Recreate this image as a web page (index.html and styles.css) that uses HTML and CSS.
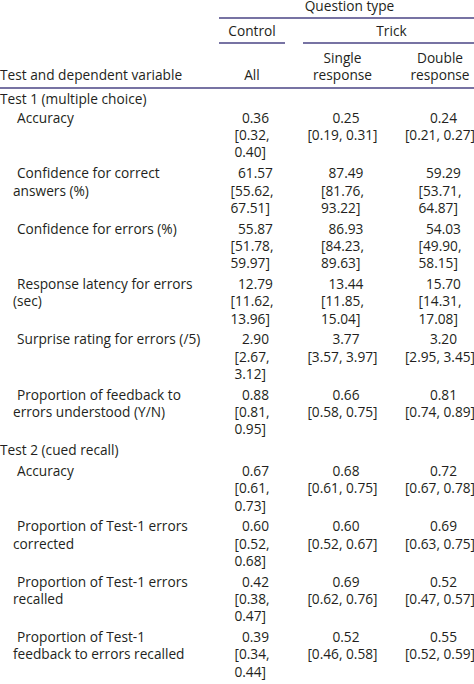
FILE: index.html
```html
<!DOCTYPE html>
<html lang="en">
<head>
<meta charset="utf-8">
<title>Question type table</title>
<link rel="stylesheet" href="styles.css">
</head>
<body>
<table class="tbl">
  <colgroup>
    <col class="w1"><col class="w2"><col class="w3"><col class="w4">
  </colgroup>
  <thead>
    <tr class="h1">
      <th class="varh" rowspan="3">Test and dependent variable</th>
      <th class="qt" colspan="3">Question type</th>
    </tr>
    <tr class="h2">
      <th class="ctl"><span class="u">Control</span></th>
      <th class="trick" colspan="2">Trick</th>
    </tr>
    <tr class="h3">
      <th class="c2">All</th>
      <th class="c3">Single<br>response</th>
      <th class="c4">Double<br>response</th>
    </tr>
  </thead>
  <tbody>
    <tr class="grp first"><td colspan="4">Test 1 (multiple choice)</td></tr>
    <tr>
      <td class="lab">Accuracy</td>
      <td class="c2"><span class="m">0.36</span><span class="ci">[0.32,<br>0.40]</span></td>
      <td class="c3"><span class="m">0.25</span><span class="ci">[0.19, 0.31]</span></td>
      <td class="c4"><span class="m">0.24</span><span class="ci">[0.21, 0.27]</span></td>
    </tr>
    <tr>
      <td class="lab">Confidence for correct<br>answers (%)</td>
      <td class="c2"><span class="m">61.57</span><span class="ci">[55.62,<br>67.51]</span></td>
      <td class="c3"><span class="m">87.49</span><span class="ci">[81.76,<br>93.22]</span></td>
      <td class="c4"><span class="m">59.29</span><span class="ci">[53.71,<br>64.87]</span></td>
    </tr>
    <tr>
      <td class="lab">Confidence for errors (%)</td>
      <td class="c2"><span class="m">55.87</span><span class="ci">[51.78,<br>59.97]</span></td>
      <td class="c3"><span class="m">86.93</span><span class="ci">[84.23,<br>89.63]</span></td>
      <td class="c4"><span class="m">54.03</span><span class="ci">[49.90,<br>58.15]</span></td>
    </tr>
    <tr>
      <td class="lab">Response latency for errors<br>(sec)</td>
      <td class="c2"><span class="m">12.79</span><span class="ci">[11.62,<br>13.96]</span></td>
      <td class="c3"><span class="m">13.44</span><span class="ci">[11.85,<br>15.04]</span></td>
      <td class="c4"><span class="m">15.70</span><span class="ci">[14.31,<br>17.08]</span></td>
    </tr>
    <tr>
      <td class="lab">Surprise rating for errors (/5)</td>
      <td class="c2"><span class="m">2.90</span><span class="ci">[2.67,<br>3.12]</span></td>
      <td class="c3"><span class="m">3.77</span><span class="ci">[3.57, 3.97]</span></td>
      <td class="c4"><span class="m">3.20</span><span class="ci">[2.95, 3.45]</span></td>
    </tr>
    <tr>
      <td class="lab">Proportion of feedback to<br>errors understood (Y/N)</td>
      <td class="c2"><span class="m">0.88</span><span class="ci">[0.81,<br>0.95]</span></td>
      <td class="c3"><span class="m">0.66</span><span class="ci">[0.58, 0.75]</span></td>
      <td class="c4"><span class="m">0.81</span><span class="ci">[0.74, 0.89]</span></td>
    </tr>
    <tr class="grp"><td colspan="4">Test 2 (cued recall)</td></tr>
    <tr>
      <td class="lab">Accuracy</td>
      <td class="c2"><span class="m">0.67</span><span class="ci">[0.61,<br>0.73]</span></td>
      <td class="c3"><span class="m">0.68</span><span class="ci">[0.61, 0.75]</span></td>
      <td class="c4"><span class="m">0.72</span><span class="ci">[0.67, 0.78]</span></td>
    </tr>
    <tr>
      <td class="lab">Proportion of Test-1 errors<br>corrected</td>
      <td class="c2"><span class="m">0.60</span><span class="ci">[0.52,<br>0.68]</span></td>
      <td class="c3"><span class="m">0.60</span><span class="ci">[0.52, 0.67]</span></td>
      <td class="c4"><span class="m">0.69</span><span class="ci">[0.63, 0.75]</span></td>
    </tr>
    <tr>
      <td class="lab">Proportion of Test-1 errors<br>recalled</td>
      <td class="c2"><span class="m">0.42</span><span class="ci">[0.38,<br>0.47]</span></td>
      <td class="c3"><span class="m">0.69</span><span class="ci">[0.62, 0.76]</span></td>
      <td class="c4"><span class="m">0.52</span><span class="ci">[0.47, 0.57]</span></td>
    </tr>
    <tr>
      <td class="lab">Proportion of Test-1<br>feedback to errors recalled</td>
      <td class="c2"><span class="m">0.39</span><span class="ci">[0.34,<br>0.44]</span></td>
      <td class="c3"><span class="m">0.52</span><span class="ci">[0.46, 0.58]</span></td>
      <td class="c4"><span class="m">0.55</span><span class="ci">[0.52, 0.59]</span></td>
    </tr>
  </tbody>
</table>
</body>
</html>
```

FILE: styles.css
```css
html, body {
  margin: 0;
  padding: 0;
  overflow: hidden;
  background: #ffffff;
}

body {
  font-family: "Open Sans", "Noto Sans", sans-serif;
  font-size: 13.7px;
  line-height: 17.3px;
  color: #231f20;
}

.tbl {
  border-collapse: separate;
  border-spacing: 0;
  table-layout: fixed;
  width: 480px;
}

.w1 { width: 219px; }
.w2 { width: 84px; }
.w3 { width: 88px; }
.w4 { width: 89px; }

.tbl th {
  font-weight: normal;
  text-align: center;
  padding: 0;
}

.varh {
  text-align: left !important;
  vertical-align: bottom;
  padding: 0 0 3.2px 0 !important;
  border-bottom: 2px solid #7773a3;
}

.qt {
  line-height: 11px;
  padding: 0 0 6.3px 0 !important;
  border-bottom: 2px solid #7773a3;
}

.ctl {
  padding: 0 18px 0 0 !important;
}

.ctl .u {
  display: block;
  padding: 3px 0 2.5px;
  border-bottom: 2px solid #7773a3;
}

.trick {
  padding: 3px 0 2.5px !important;
  border-bottom: 2px solid #7773a3;
}

.h3 th {
  vertical-align: bottom;
  padding-top: 4.9px !important;
  padding-bottom: 3.2px !important;
  border-bottom: 2px solid #7773a3;
}

.tbl td {
  vertical-align: top;
  padding: 1.5px 0 2px 0;
}

.grp td {
  text-align: left;
}

.grp.first td {
  padding-top: 1.3px;
  padding-bottom: 0;
}

.tbl .c2 {
  padding-right: 18px;
  text-align: center;
}

.tbl .c3 {
  padding-right: 9px;
  text-align: center;
}

.tbl .c4 {
  padding-left: 9px;
  text-align: center;
}

.lab {
  padding-left: 13px !important;
  text-indent: 4px;
  white-space: nowrap;
}

.m {
  display: block;
  padding-left: 7px;
}

.ci {
  display: inline-block;
  text-align: left;
  white-space: nowrap;
}
```
